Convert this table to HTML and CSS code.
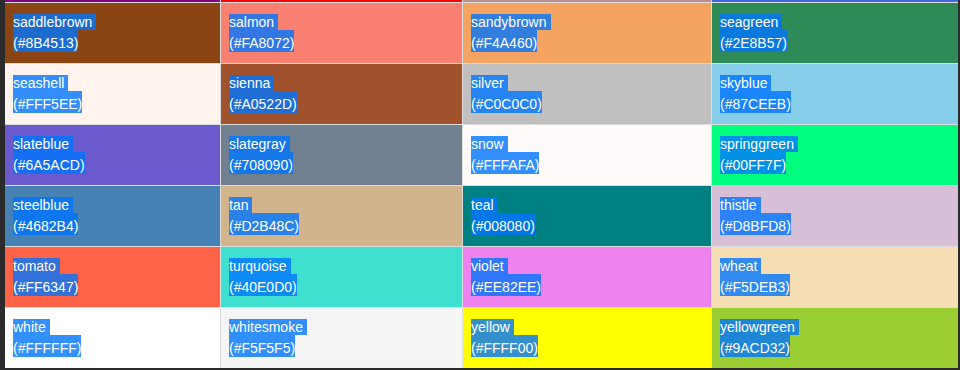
FILE: index.html
```html
<!DOCTYPE html>
<html lang="en">
<head>
<meta charset="utf-8">
<title>Colors</title>
<link rel="stylesheet" href="styles.css">
</head>
<body>
<div class="table">
  <div class="cell" style="background:#800080"></div>
  <div class="cell" style="background:#FF0000"></div>
  <div class="cell" style="background:#BC8F8F"></div>
  <div class="cell" style="background:#4169E1"></div>

  <div class="cell" style="background:#8B4513"><span class="name">saddlebrown</span><span class="hex">(#8B4513)</span></div>
  <div class="cell" style="background:#FA8072"><span class="name">salmon</span><span class="hex">(#FA8072)</span></div>
  <div class="cell" style="background:#F4A460"><span class="name">sandybrown</span><span class="hex">(#F4A460)</span></div>
  <div class="cell" style="background:#2E8B57"><span class="name">seagreen</span><span class="hex">(#2E8B57)</span></div>

  <div class="cell" style="background:#FFF5EE"><span class="name">seashell</span><span class="hex">(#FFF5EE)</span></div>
  <div class="cell" style="background:#A0522D"><span class="name">sienna</span><span class="hex">(#A0522D)</span></div>
  <div class="cell" style="background:#C0C0C0"><span class="name">silver</span><span class="hex">(#C0C0C0)</span></div>
  <div class="cell" style="background:#87CEEB"><span class="name">skyblue</span><span class="hex">(#87CEEB)</span></div>

  <div class="cell" style="background:#6A5ACD"><span class="name">slateblue</span><span class="hex">(#6A5ACD)</span></div>
  <div class="cell" style="background:#708090"><span class="name">slategray</span><span class="hex">(#708090)</span></div>
  <div class="cell" style="background:#FFFAFA"><span class="name">snow</span><span class="hex">(#FFFAFA)</span></div>
  <div class="cell" style="background:#00FF7F"><span class="name">springgreen</span><span class="hex">(#00FF7F)</span></div>

  <div class="cell" style="background:#4682B4"><span class="name">steelblue</span><span class="hex">(#4682B4)</span></div>
  <div class="cell" style="background:#D2B48C"><span class="name">tan</span><span class="hex">(#D2B48C)</span></div>
  <div class="cell" style="background:#008080"><span class="name">teal</span><span class="hex">(#008080)</span></div>
  <div class="cell" style="background:#D8BFD8"><span class="name">thistle</span><span class="hex">(#D8BFD8)</span></div>

  <div class="cell" style="background:#FF6347"><span class="name">tomato</span><span class="hex">(#FF6347)</span></div>
  <div class="cell" style="background:#40E0D0"><span class="name">turquoise</span><span class="hex">(#40E0D0)</span></div>
  <div class="cell" style="background:#EE82EE"><span class="name">violet</span><span class="hex">(#EE82EE)</span></div>
  <div class="cell" style="background:#F5DEB3"><span class="name">wheat</span><span class="hex">(#F5DEB3)</span></div>

  <div class="cell" style="background:#FFFFFF"><span class="name">white</span><span class="hex">(#FFFFFF)</span></div>
  <div class="cell" style="background:#F5F5F5"><span class="name">whitesmoke</span><span class="hex">(#F5F5F5)</span></div>
  <div class="cell" style="background:#FFFF00"><span class="name">yellow</span><span class="hex">(#FFFF00)</span></div>
  <div class="cell" style="background:#9ACD32"><span class="name">yellowgreen</span><span class="hex">(#9ACD32)</span></div>
</div>
</body>
</html>
```
FILE: styles.css
```css
html, body {
  margin: 0;
  padding: 0;
  height: 370px;
  overflow: hidden;
  background: #2b2b2b;
}

.table {
  display: grid;
  grid-template-columns: 215px 241px 248px 246px;
  grid-auto-rows: 60px;
  gap: 1px;
  background: #dddddd;
  margin: -58px 0 0 5px;
  width: 953px;
}

.cell {
  display: flex;
  flex-direction: column;
  justify-content: center;
  align-items: flex-start;
  padding: 0 8px;
}

.name,
.hex {
  background: rgba(0, 116, 255, 0.8);
  color: #ffffff;
  font-family: "Liberation Sans", Arial, sans-serif;
  font-size: 14px;
  line-height: 16px;
  white-space: nowrap;
}

.name {
  height: 16px;
  padding-right: 4px;
}

.hex {
  padding-top: 5px;
  padding-bottom: 1px;
}
```
